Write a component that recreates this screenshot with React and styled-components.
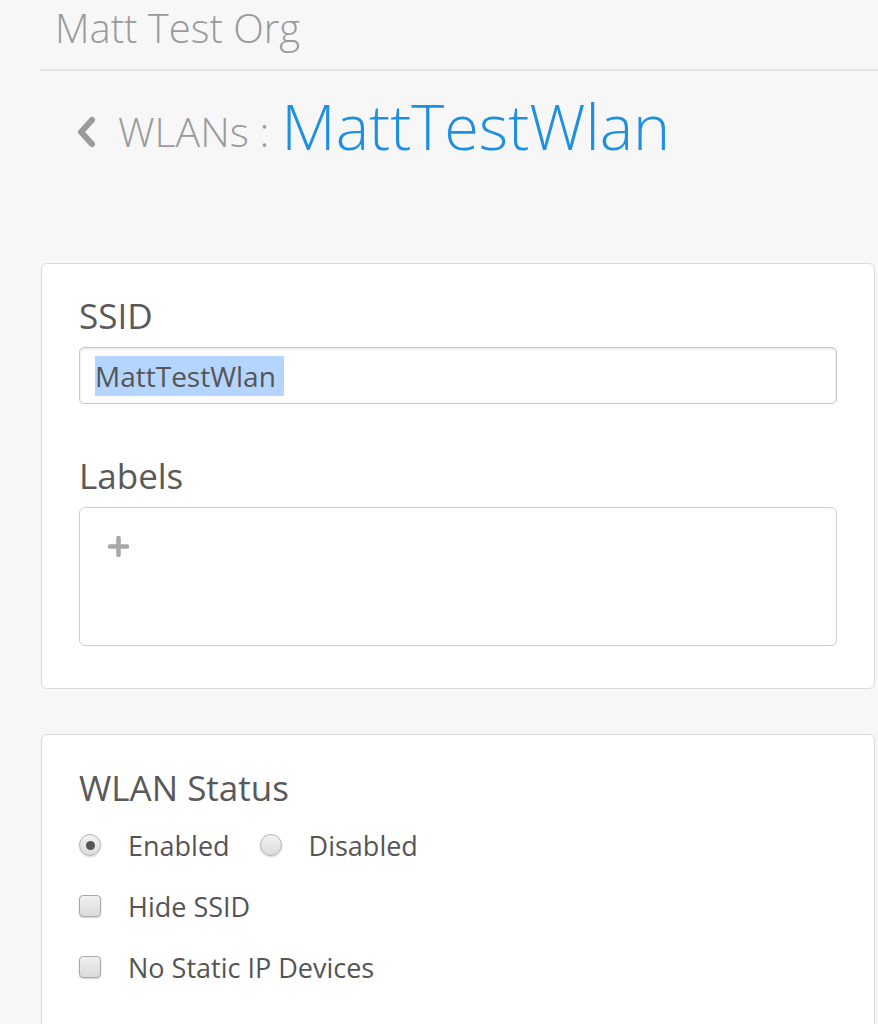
import React from "react";
import styled, { createGlobalStyle } from "styled-components";

const GlobalStyle = createGlobalStyle`
  html, body {
    margin: 0;
    padding: 0;
    background: #f7f7f7;
    font-family: "Open Sans", "Liberation Sans", sans-serif;
    color: #555;
  }
  *, *::before, *::after {
    box-sizing: border-box;
  }
`;

const Page = styled.div`
  min-height: 1024px;
  background: #f7f7f7;
  overflow: hidden;
`;

const OrgHeader = styled.header`
  margin-left: 40px;
  padding: 4px 0 17px 15px;
  border-bottom: 2px solid #e3e8ed;
`;

const OrgName = styled.h2`
  margin: 0;
  font-size: 40px;
  line-height: 48px;
  font-weight: 300;
  color: #9a9a9a;
`;

const Breadcrumb = styled.div`
  display: flex;
  align-items: center;
  margin-top: 17px;
  padding-left: 75px;
  height: 76px;
`;

const BackLink = styled.a`
  display: flex;
  align-items: center;
  margin-right: 21px;
  margin-top: 12px;
  cursor: pointer;
`;

const Crumb = styled.span`
  font-size: 41px;
  font-weight: 300;
  color: #9a9a9a;
  margin-top: 10px;
  margin-right: 12px;
  white-space: nowrap;
`;

const Title = styled.h1`
  margin: 0;
  font-size: 63px;
  line-height: 76px;
  font-weight: 300;
  color: #1f8fe0;
  white-space: nowrap;
`;

const Cards = styled.div`
  display: flex;
  flex-direction: column;
  gap: 45px;
  margin: 99px 3px 0 41px;
`;

const Card = styled.section`
  background: #fff;
  border: 1px solid #d9d9d9;
  border-radius: 6px;
  padding: ${({ $top }) => $top}px 37px ${({ $bottom }) => $bottom}px 37px;
`;

const FieldLabel = styled.label`
  display: block;
  font-size: 35px;
  line-height: 42px;
  font-weight: 400;
  color: #595959;
  margin-top: ${({ $gap }) => $gap || 0}px;
  margin-bottom: 10px;
`;

const TextBox = styled.div`
  display: flex;
  align-items: center;
  height: 57px;
  padding: 0 15px;
  border: 1px solid #c8c8c8;
  border-radius: 5px;
  box-shadow: inset 0 1px 3px rgba(0, 0, 0, 0.12);
  background: #fff;
`;

const Selected = styled.span`
  display: inline-block;
  font-size: 28px;
  line-height: 40px;
  color: #555;
  background: #b4d5fe;
  padding-right: 8px;
`;

const LabelsBox = styled.div`
  height: 139px;
  padding: 28px;
  border: 1px solid #cfcfcf;
  border-radius: 6px;
  background: #fff;
`;

const AddButton = styled.span`
  display: inline-flex;
  width: 21px;
  height: 21px;
  cursor: pointer;
`;

const SectionTitle = styled.h3`
  margin: 0;
  font-size: 35px;
  line-height: 40px;
  font-weight: 400;
  color: #595959;
`;

const OptionRow = styled.div`
  display: flex;
  align-items: center;
  height: 30px;
  margin-top: ${({ $gap }) => $gap}px;
`;

const Option = styled.label`
  display: flex;
  align-items: center;
  margin-right: 30px;
  font-size: 27px;
  color: #555;
  cursor: pointer;
`;

const Radio = styled.span`
  position: relative;
  width: 22px;
  height: 22px;
  border-radius: 50%;
  border: 1px solid #b5b5b5;
  background: linear-gradient(#f2f2f2, #dcdcdc);
  box-shadow: 0 1px 2px rgba(0, 0, 0, 0.18);
  margin-right: 27px;
  flex-shrink: 0;

  &::after {
    content: "";
    display: ${({ $checked }) => ($checked ? "block" : "none")};
    position: absolute;
    left: 50%;
    top: 50%;
    width: 9px;
    height: 9px;
    margin: -4.5px 0 0 -4.5px;
    border-radius: 50%;
    background: #555;
  }
`;

const Checkbox = styled.span`
  width: 22px;
  height: 22px;
  border-radius: 4px;
  border: 1px solid #a8a8a8;
  background: linear-gradient(#f0f0f0, #dadada);
  box-shadow: 0 1px 2px rgba(0, 0, 0, 0.18);
  margin-right: 27px;
  flex-shrink: 0;
`;

function ChevronLeft() {
  return (
    <svg width="22" height="32" viewBox="0 0 22 32">
      <polyline
        points="17,4 6,16 17,28"
        fill="none"
        stroke="#9a9a9a"
        strokeWidth="6"
        strokeLinecap="round"
        strokeLinejoin="round"
      />
    </svg>
  );
}

function PlusIcon() {
  return (
    <svg width="21" height="21" viewBox="0 0 21 21">
      <path
        d="M10.5 2 V19 M2 10.5 H19"
        stroke="#a8a8a8"
        strokeWidth="4.5"
        strokeLinecap="round"
      />
    </svg>
  );
}

export default function App() {
  return (
    <Page>
      <GlobalStyle />
      <OrgHeader>
        <OrgName>Matt Test Org</OrgName>
      </OrgHeader>

      <Breadcrumb>
        <BackLink>
          <ChevronLeft />
        </BackLink>
        <Crumb>WLANs :</Crumb>
        <Title>MattTestWlan</Title>
      </Breadcrumb>

      <Cards>
        <Card $top={31} $bottom={42}>
          <FieldLabel>SSID</FieldLabel>
          <TextBox>
            <Selected>MattTestWlan</Selected>
          </TextBox>

          <FieldLabel $gap={51}>Labels</FieldLabel>
          <LabelsBox>
            <AddButton>
              <PlusIcon />
            </AddButton>
          </LabelsBox>
        </Card>

        <Card $top={33} $bottom={60}>
          <SectionTitle>WLAN Status</SectionTitle>
          <OptionRow $gap={22}>
            <Option>
              <Radio $checked />
              Enabled
            </Option>
            <Option>
              <Radio />
              Disabled
            </Option>
          </OptionRow>
          <OptionRow $gap={31}>
            <Option>
              <Checkbox />
              Hide SSID
            </Option>
          </OptionRow>
          <OptionRow $gap={31}>
            <Option>
              <Checkbox />
              No Static IP Devices
            </Option>
          </OptionRow>
        </Card>
      </Cards>
    </Page>
  );
}
